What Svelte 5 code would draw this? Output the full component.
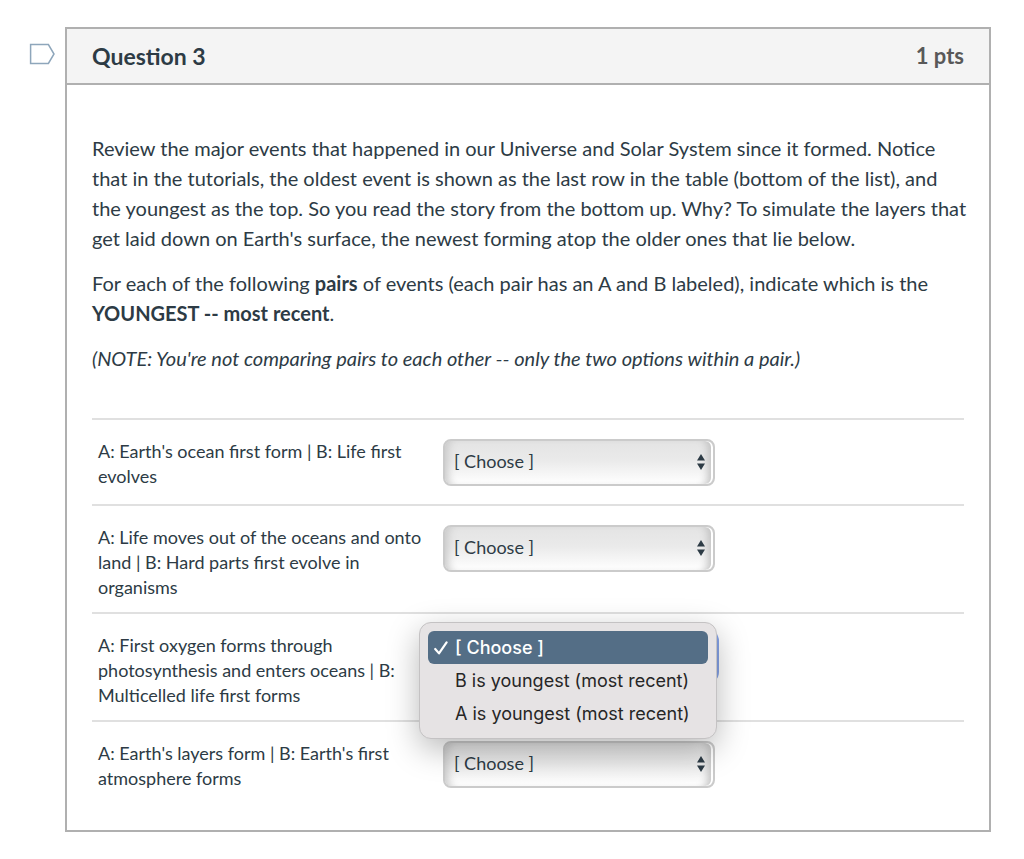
<script lang="ts">
    const choices = ['[ Choose ]', 'B is youngest (most recent)', 'A is youngest (most recent)'];

    let pairs = $state([
        { text: "A: Earth's ocean first form | B: Life first evolves", answer: choices[0] },
        { text: 'A: Life moves out of the oceans and onto land | B: Hard parts first evolve in organisms', answer: choices[0] },
        { text: 'A: First oxygen forms through photosynthesis and enters oceans | B: Multicelled life first forms', answer: choices[0] },
        { text: "A: Earth's layers form | B: Earth's first atmosphere forms", answer: choices[0] },
    ]);

    let openIndex = $state(2);
    let flagged = $state(false);

    function pick(i: number, choice: string) {
        pairs[i].answer = choice;
        openIndex = -1;
    }
</script>

<main class="page">
    <button
        class="flag"
        class:flagged
        type="button"
        aria-label="Flag question"
        aria-pressed={flagged}
        onclick={() => (flagged = !flagged)}
    >
        <svg viewBox="0 0 26 22" width="26" height="22" aria-hidden="true">
            <path d="M1.6 1.6H19.4L25 11L19.4 20.4H1.6Z" />
        </svg>
    </button>

    <section class="question">
        <header class="header">
            <h2>Question 3</h2>
            <span class="points">1 pts</span>
        </header>

        <div class="body">
            <div class="prompt">
                <p>
                    Review the major events that happened in our Universe and Solar System since it formed. Notice
                    that in the tutorials, the oldest event is shown as the last row in the table (bottom of the
                    list), and the youngest as the top. So you read the story from the bottom up. Why? To simulate
                    the layers that get laid down on Earth's surface, the newest forming atop the older ones that
                    lie below.
                </p>
                <p>
                    For each of the following <strong>pairs</strong> of events (each pair has an A and B labeled),
                    indicate which is the <strong>YOUNGEST -- most recent</strong>.
                </p>
                <p><em>(NOTE: You're not comparing pairs to each other -- only the two options within a pair.)</em></p>
            </div>

            <div class="answers">
                {#each pairs as pair, i}
                    <div class="answer">
                        <label for="pair-{i}">{pair.text}</label>
                        <div class="field" class:open={openIndex === i}>
                            <select id="pair-{i}" bind:value={pair.answer}>
                                {#each choices as choice}
                                    <option value={choice}>{choice}</option>
                                {/each}
                            </select>
                            <svg class="arrows" viewBox="0 0 8 16" width="8" height="16" aria-hidden="true">
                                <path d="M4 0L8 6.5H0Z M0 9.5H8L4 16Z" />
                            </svg>

                            {#if openIndex === i}
                                <div class="menu" role="listbox" aria-label="Answer">
                                    {#each choices as choice}
                                        <button
                                            type="button"
                                            role="option"
                                            aria-selected={pair.answer === choice}
                                            class:selected={pair.answer === choice}
                                            onclick={() => pick(i, choice)}
                                        >
                                            <svg class="check" viewBox="0 0 14 14" width="14" height="14" aria-hidden="true">
                                                <path d="M1.2 8L5 12.4L12.6 1.4" />
                                            </svg>
                                            {choice}
                                        </button>
                                    {/each}
                                </div>
                            {/if}
                        </div>
                    </div>
                {/each}
            </div>
        </div>
    </section>
</main>

<style>
    :global(body) {
        margin: 0;
        background: #fff;
    }

    .page {
        display: flex;
        align-items: flex-start;
        gap: 10px;
        padding: 27px 33px 27px 29px;
        font-family: Lato, "Open Sans", sans-serif;
        font-size: 20px;
        line-height: 30px;
        color: #2d3b45;
    }

    .flag {
        flex: none;
        margin: 16px 0 0;
        padding: 0;
        border: 0;
        background: none;
        cursor: pointer;
    }

    .flag svg {
        display: block;
    }

    .flag path {
        fill: #fff;
        stroke: #8ea6bb;
        stroke-width: 1.5;
    }

    .flagged path {
        fill: #fc5e13;
    }

    .question {
        flex: 1;
        min-width: 0;
        border: 2px solid #b0b0b0;
    }

    .header {
        display: flex;
        align-items: center;
        justify-content: space-between;
        padding: 12px 25px;
        background: #f4f4f4;
        border-bottom: 2px solid #b0b0b0;
    }

    h2 {
        margin: 0;
        font-size: 23px;
        font-weight: bold;
    }

    .points {
        font-size: 22px;
        font-weight: bold;
        color: #595959;
    }

    .body {
        padding: 48px 25px 24px;
    }

    .prompt {
        margin-right: -6px;
    }

    p {
        margin: 0 0 15px;
    }

    .answers {
        margin-top: 45px;
    }

    .answer {
        display: grid;
        grid-template-columns: 333px 272px;
        gap: 12px;
        align-items: start;
        padding: 19px 6px 12px;
        border-top: 2px solid #e0e0e0;
    }

    label {
        font-size: 18px;
        line-height: 25px;
    }

    .field {
        position: relative;
        margin-bottom: 6px;
    }

    select {
        appearance: none;
        display: block;
        width: 100%;
        height: 47px;
        margin: 0;
        padding: 0 9px 4px;
        border: 2px solid #cbcbcb;
        border-radius: 8px;
        background: linear-gradient(#e4e4e4, #eaeaea 45%, #fff);
        box-shadow: inset -2px 0 0 #fff, inset 9px 0 8px -6px #c8c8c8, inset -11px 0 8px -6px #c0c0c0;
        font-family: inherit;
        font-size: 18px;
        color: #2d3b45;
    }

    .open select {
        box-shadow: 0 0 0 4px #86a3e8;
    }

    .arrows {
        position: absolute;
        top: 15px;
        right: 10px;
        fill: #2d3b45;
        pointer-events: none;
    }

    .menu {
        position: absolute;
        z-index: 1;
        top: -11px;
        left: -24px;
        box-sizing: border-box;
        width: 298px;
        padding: 8px;
        border: 1px solid #c4c2c3;
        border-radius: 12px;
        background: #e6e3e4;
        box-shadow: 0 10px 32px rgba(0, 0, 0, 0.28);
    }

    .menu button {
        display: flex;
        align-items: center;
        gap: 7px;
        width: 100%;
        height: 33px;
        padding: 0 6px;
        border: 0;
        border-radius: 6px;
        background: none;
        font-family: Inter, sans-serif;
        font-size: 18px;
        color: #262626;
        text-align: left;
        white-space: nowrap;
    }

    .menu .selected {
        background: #546e86;
        color: #fff;
        font-weight: 500;
    }

    .check {
        flex: none;
        fill: none;
        visibility: hidden;
    }

    .selected .check {
        stroke: #fff;
        stroke-width: 2.2;
        stroke-linecap: round;
        stroke-linejoin: round;
        visibility: visible;
    }
</style>
